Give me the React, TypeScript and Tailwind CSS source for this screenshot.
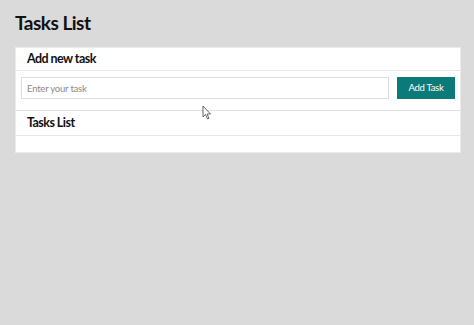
import React from "react";

export default function App() {
  return (
    <div
      className="relative w-[474px] h-[325px] bg-[#dadada] overflow-hidden pt-[11px] pl-[15px]"
      style={{ fontFamily: "Lato, 'Open Sans', sans-serif" }}
    >
      <h1 className="text-[19px] leading-[24px] font-bold tracking-[-0.5px] text-[#111]">Tasks List</h1>
      <div className="mt-[12px] w-[446px] bg-white border border-[#ebebeb]">
        <div className="h-[23px] flex items-center px-[11px] border-b border-[#e6e6e6]">
          <span className="text-[12.5px] leading-[16px] font-bold tracking-[-0.55px] text-[#111]">Add new task</span>
        </div>
        <div className="h-[40px] flex items-start gap-[8px] px-[5px] pt-[6px] border-b border-[#e3e3e3]">
          <input
            className="flex-1 h-[22px] border border-[#dedede] px-[5px] text-[9.5px] tracking-[-0.2px] text-[#333] placeholder:text-[#8a8a8a] outline-none"
            placeholder="Enter your task"
          />
          <button className="w-[58px] h-[22px] bg-[#0b7a78] text-white text-[9.5px] tracking-[-0.3px]">Add Task</button>
        </div>
        <div className="h-[25px] flex items-center px-[11px] border-b border-[#e8e8e8]">
          <span className="text-[12.5px] leading-[16px] font-bold tracking-[-0.55px] text-[#111]">Tasks List</span>
        </div>
        <div className="h-[16px]" />
      </div>
      <svg
        className="absolute left-[202px] top-[105px]"
        width="10"
        height="15"
        viewBox="0 0 10 15"
      >
        <path
          d="M1 1 L1 12 L3.5 9.5 L5.5 14 L7 13.3 L5 9 L8.5 9 Z"
          fill="white"
          stroke="#555"
          strokeWidth="0.9"
          strokeLinejoin="round"
        />
      </svg>
    </div>
  );
}
